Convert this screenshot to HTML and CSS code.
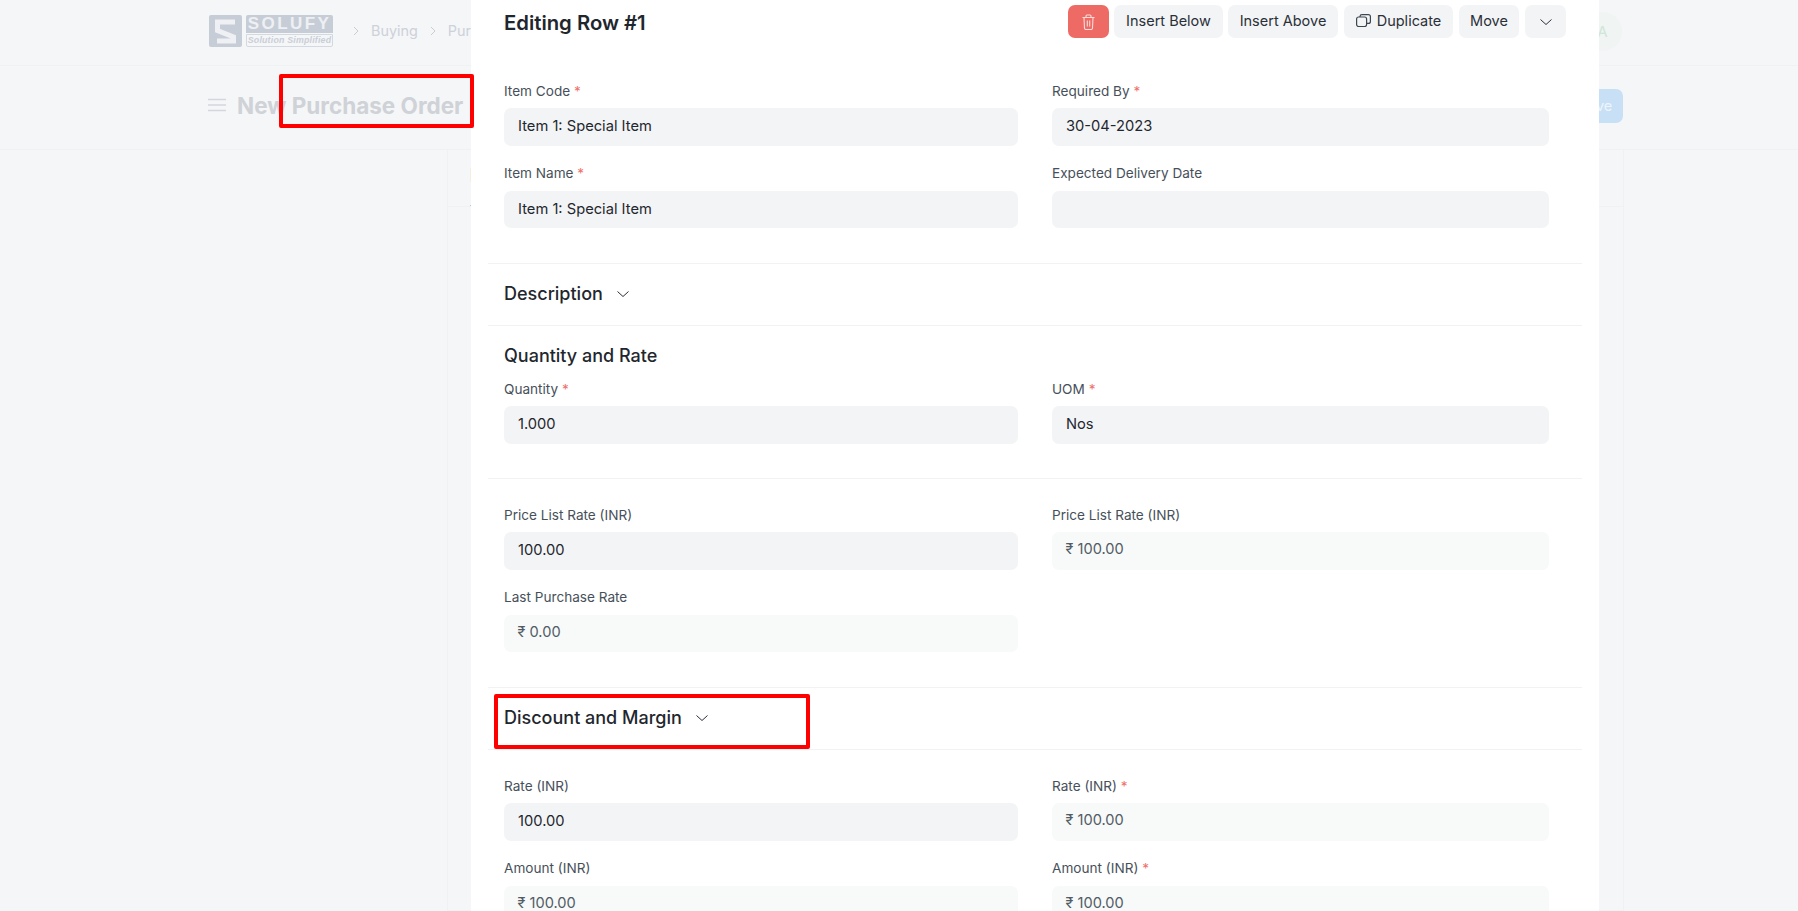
FILE: index.html
```html
<!DOCTYPE html>
<html lang="en">
<head>
<meta charset="utf-8">
<title>New Purchase Order</title>
<link rel="stylesheet" href="styles.css">
</head>
<body>
<div class="page">
  <header class="navbar">
    <div class="logo">
      <div class="logo-mark"><svg viewBox="0 0 33 32" width="33" height="32"><path d="M26 7H8.500v8.500l16 6.500v4H8" fill="none" stroke="#eef0f3" stroke-width="5"/></svg></div>
      <div class="logo-words">
        <div class="logo-name">SOLUFY</div>
        <div class="logo-tag">Solution Simplified</div>
      </div>
    </div>
    <nav class="crumbs">
      <svg class="crumb-sep" viewBox="0 0 8 12" width="8" height="12"><path d="M2 2l4 4-4 4" fill="none" stroke="#c9ced6" stroke-width="1"/></svg>
      <span>Buying</span>
      <svg class="crumb-sep" viewBox="0 0 8 12" width="8" height="12"><path d="M2 2l4 4-4 4" fill="none" stroke="#c9ced6" stroke-width="1"/></svg>
      <span>Purchase Order</span>
    </nav>
    <div class="avatar">A</div>
  </header>
  <div class="page-head">
    <svg class="burger" viewBox="0 0 18 14" width="18" height="14"><path d="M0 1.500h18M0 7h18M0 12.500h18" stroke="#d3d6db" stroke-width="1.400"/></svg>
    <h1 class="page-title">New Purchase Order</h1>
    <div class="save">Save</div>
  </div>
  <div class="page-body">
    <div class="form-panel">
      <div class="panel-top"><div class="sliver-amber"></div><div class="sliver-blue"></div></div>
    </div>
  </div>
</div>

<div class="modal">
  <div class="modal-head">
    <h2 class="modal-title">Editing Row #1</h2>
    <div class="actions">
      <button class="btn btn-danger"><svg viewBox="0 0 13 16" width="13" height="16"><path d="M.5 3.500h12M4 3.500V2a1 1 0 0 1 1-1h3a1 1 0 0 1 1 1v1.500M2 3.500l.5 10.500a1.500 1.500 0 0 0 1.500 1.500h5a1.500 1.500 0 0 0 1.500-1.500L11 3.500M5.300 6.500v6M7.700 6.500v6" fill="none" stroke="#fbdcda" stroke-width="1.100"/></svg></button>
      <button class="btn w-below">Insert Below</button>
      <button class="btn w-above">Insert Above</button>
      <button class="btn w-dup"><svg viewBox="0 0 15 13" width="15" height="13"><rect x=".6" y="3" width="10" height="9.500" rx="2" fill="none" stroke="#3d4650" stroke-width="1.200"/><path d="M4 3V2.500A2 2 0 0 1 6 .6h6.400a2 2 0 0 1 2 2v4.800a2 2 0 0 1-2 2h-1.800" fill="none" stroke="#3d4650" stroke-width="1.200"/></svg>Duplicate</button>
      <button class="btn w-move">Move</button>
      <button class="btn w-more"><svg viewBox="0 0 14 8" width="14" height="8"><path d="M1.500 1.500L7 6.500l5.500-5" fill="none" stroke="#2a3038" stroke-width="1"/></svg></button>
    </div>
  </div>

  <section class="section first">
    <div class="grid">
      <div class="field"><label>Item Code <i>*</i></label><div class="input">Item 1: Special Item</div></div>
      <div class="field"><label>Required By <i>*</i></label><div class="input">30-04-2023</div></div>
      <div class="field"><label>Item Name <i>*</i></label><div class="input">Item 1: Special Item</div></div>
      <div class="field"><label>Expected Delivery Date</label><div class="input"></div></div>
    </div>
  </section>

  <section class="section collapsed">
    <h3 class="sec-title">Description<svg viewBox="0 0 14 8" width="14" height="8"><path d="M1.500 1.500L7 6.500l5.500-5" fill="none" stroke="#2a3038" stroke-width="1"/></svg></h3>
  </section>

  <section class="section qty">
    <h3 class="sec-title plain">Quantity and Rate</h3>
    <div class="grid">
      <div class="field"><label>Quantity <i>*</i></label><div class="input">1.000</div></div>
      <div class="field"><label>UOM <i>*</i></label><div class="input">Nos</div></div>
    </div>
  </section>

  <section class="section rates">
    <div class="grid">
      <div class="stack">
        <div class="field"><label>Price List Rate (INR)</label><div class="input">100.00</div></div>
        <div class="field"><label>Last Purchase Rate</label><div class="input ro">₹ 0.00</div></div>
      </div>
      <div class="stack">
        <div class="field"><label>Price List Rate (INR)</label><div class="input ro">₹ 100.00</div></div>
      </div>
    </div>
  </section>

  <section class="section collapsed">
    <h3 class="sec-title">Discount and Margin<svg viewBox="0 0 14 8" width="14" height="8"><path d="M1.500 1.500L7 6.500l5.500-5" fill="none" stroke="#2a3038" stroke-width="1"/></svg></h3>
  </section>

  <section class="section amounts">
    <div class="grid">
      <div class="field"><label>Rate (INR)</label><div class="input">100.00</div></div>
      <div class="field"><label>Rate (INR) <i>*</i></label><div class="input ro">₹ 100.00</div></div>
      <div class="field"><label>Amount (INR)</label><div class="input ro">₹ 100.00</div></div>
      <div class="field"><label>Amount (INR) <i>*</i></label><div class="input ro">₹ 100.00</div></div>
    </div>
  </section>
</div>

<div class="mark mark-title"></div>
<div class="mark mark-discount"></div>
</body>
</html>
```
FILE: styles.css
```css
* { box-sizing: border-box; }
html, body { margin: 0; height: 911px; overflow: hidden; }
body { position: relative; font-family: Inter, "Noto Sans", sans-serif; background: #f5f6f8; color: #1f272e; }

.page { height: 911px; overflow: hidden; background: #f5f6f8; }
.navbar { height: 66px; display: flex; align-items: center; padding: 0 0 4px 209px; border-bottom: 1px solid #f0f1f3; }
.logo { display: flex; gap: 4px; height: 32px; }
.logo-mark { width: 33px; height: 32px; background: #c7cdd6; border-radius: 2px; }
.logo-mark svg { display: block; }
.logo-words { width: 87px; display: flex; flex-direction: column; gap: 1px; }
.logo-name { height: 18px; background: #c7cdd6; color: #eef0f3; font: 700 17px/18px "Liberation Sans", sans-serif; letter-spacing: 2.400px; text-align: center; border-radius: 2px 2px 0 0; }
.logo-tag { height: 13px; border: 1px solid #d5d9df; color: #c9ced6; font: italic 700 8.800px/11px "Liberation Sans", sans-serif; letter-spacing: .2px; text-align: center; white-space: nowrap; border-radius: 0 0 2px 2px; }
.crumbs { width: 127px; overflow: hidden; display: flex; align-items: center; gap: 11px; margin-left: 19px; font-size: 14.400px; color: #cdd1d8; white-space: nowrap; }
.crumb-sep { flex: none; }
.avatar { position: absolute; left: 1583px; top: 12px; width: 39px; height: 39px; border-radius: 50%; background: #f0f4f3; color: #cfe6d8; font-size: 15px; line-height: 39px; text-align: center; }
.page-head { height: 84px; display: flex; align-items: center; padding: 0 175px 5px 208px; border-bottom: 1px solid #f0f1f3; }
.burger { margin-right: 11px; flex: none; }
.page-title { margin: 0; font-size: 22.500px; font-weight: 700; color: #cfd2d6; white-space: nowrap; }
.save { margin: 2px 0 0 auto; width: 60px; height: 34px; padding-left: 5px; border-radius: 7px; background: #c8e0f6; color: #eef5fb; font-size: 14.500px; line-height: 34px; text-align: center; }
.page-body { padding: 0 0 0 447px; }
.form-panel { width: 1177px; height: 761px; border: 1px solid #f0f1f3; border-top: 0; }
.panel-top { height: 57px; padding: 18px 0 0 22px; border-bottom: 1px solid #f0f1f3; }
.sliver-amber { width: 1px; height: 14px; background: #f8efd8; }
.sliver-blue { width: 1px; height: 1px; margin-top: 23px; background: #a9cdf0; }

.modal { position: absolute; left: 471px; top: 0; width: 1128px; height: 911px; overflow: hidden; background: #fff; padding: 0 17px; }
.modal-head { height: 82.500px; display: flex; justify-content: space-between; padding: 5px 16px 0 16px; }
.modal-title { margin: 6px 0 0; font-size: 20.300px; line-height: 24px; font-weight: 600; color: #1f272e; }
.actions { display: flex; gap: 5px; height: 33px; }
.btn { height: 33px; border: 0; padding: 0 0 2px; border-radius: 7px; background: #f3f4f6; color: #2a3038; font: 400 14.500px Inter, sans-serif; display: flex; align-items: center; justify-content: center; gap: 6px; }
.btn-danger { width: 41px; background: #ee6a65; padding: 0; }
.w-below { width: 109px; }
.w-above { width: 110px; }
.w-dup { width: 109px; margin-left: 1px; }
.w-move { width: 60px; margin-left: 1px; }
.w-more { width: 41px; margin-left: 1px; padding: 0; }

.section { border-bottom: 1px solid #f1f2f4; padding: 0 16px; }
.grid { display: grid; grid-template-columns: 514px 497px; column-gap: 34px; row-gap: 19.500px; }
.stack { display: flex; flex-direction: column; gap: 19.500px; }
.field label { display: block; height: 17px; margin-bottom: 8.500px; font-size: 13.600px; line-height: 17px; color: #47505a; }
.field label i { font-style: normal; color: #f0706b; }
.input { height: 37.500px; padding-left: 14px; border-radius: 7px; background: #f3f4f6; font-size: 14.700px; font-weight: 400; line-height: 37px; color: #1f272e; }
.input.ro { background: #f8f9f9; font-size: 14.600px; color: #525c66; line-height: 34px; padding-left: 13.500px; }
.section.first { height: 181.500px; }
.section.collapsed { height: 62px; }
.sec-title { margin: 0; padding-top: 19px; font-size: 18px; line-height: 22px; font-weight: 450; color: #1f272e; display: flex; align-items: center; gap: 13px; }
.sec-title.plain { margin-bottom: 13.500px; }
.section.qty { height: 153px; }
.section.rates { height: 209px; padding-top: 27.500px; }
.section.amounts { padding-top: 27.500px; border-bottom: 0; }

.mark { position: absolute; border: 4px solid #f00; border-radius: 2px; }
.mark-title { left: 279px; top: 74px; width: 195px; height: 54px; }
.mark-discount { left: 494px; top: 694px; width: 316px; height: 55px; }
```
